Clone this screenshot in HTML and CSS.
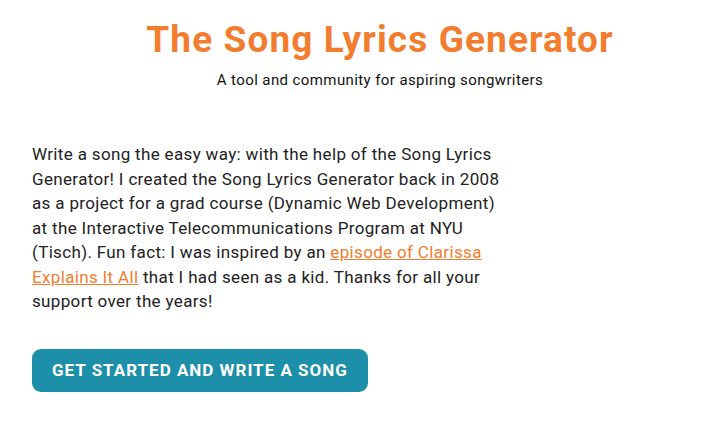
FILE: index.html
```html
<!DOCTYPE html>
<html lang="en">
<head>
<meta charset="utf-8">
<title>The Song Lyrics Generator</title>
<link rel="stylesheet" href="styles.css">
</head>
<body>
<div class="page">
  <header class="header">
    <h1 class="title">The Song Lyrics Generator</h1>
    <p class="tagline">A tool and community for aspiring songwriters</p>
  </header>
  <main class="intro">
    <p class="lead">Write a song the easy way: with the help of the Song Lyrics Generator! I created the Song Lyrics Generator back in 2008 as a project for a grad course (Dynamic Web Development) at the Interactive Telecommunications Program at NYU (Tisch). Fun fact: I was inspired by an <a href="#" class="link">episode of Clarissa Explains It All</a> that I had seen as a kid. Thanks for all your support over the years!</p>
    <a href="#" class="cta">Get started and write a song</a>
  </main>
</div>
</body>
</html>
```
FILE: styles.css
```css
html, body {
  margin: 0;
  padding: 0;
  background: #ffffff;
}
body {
  font-family: Roboto, "Liberation Sans", Arial, sans-serif;
  color: #222222;
}
.page {
  padding: 0 0 0 32px;
}
.header {
  text-align: center;
  padding-top: 18px;
}
.title {
  margin: 0;
  font-size: 37px;
  font-weight: 700;
  letter-spacing: 1.1px;
  color: #f37d2f;
  line-height: 44px;
}
.tagline {
  margin: 8px 0 0;
  font-size: 15px;
  letter-spacing: 0.4px;
  line-height: 20px;
  color: #111111;
}
.intro {
  padding-top: 52px;
  width: 480px;
}
.lead {
  margin: 0;
  font-size: 17px;
  letter-spacing: 0.34px;
  line-height: 24.5px;
  color: #222222;
}
.link {
  color: #f37d2f;
}
.cta {
  display: inline-block;
  margin-top: 35px;
  padding: 0 20px;
  height: 43px;
  line-height: 43px;
  border-radius: 9px;
  background: #1d8fa8;
  color: #ffffff;
  text-decoration: none;
  text-transform: uppercase;
  font-weight: 700;
  font-size: 17px;
  letter-spacing: 1px;
}
```
